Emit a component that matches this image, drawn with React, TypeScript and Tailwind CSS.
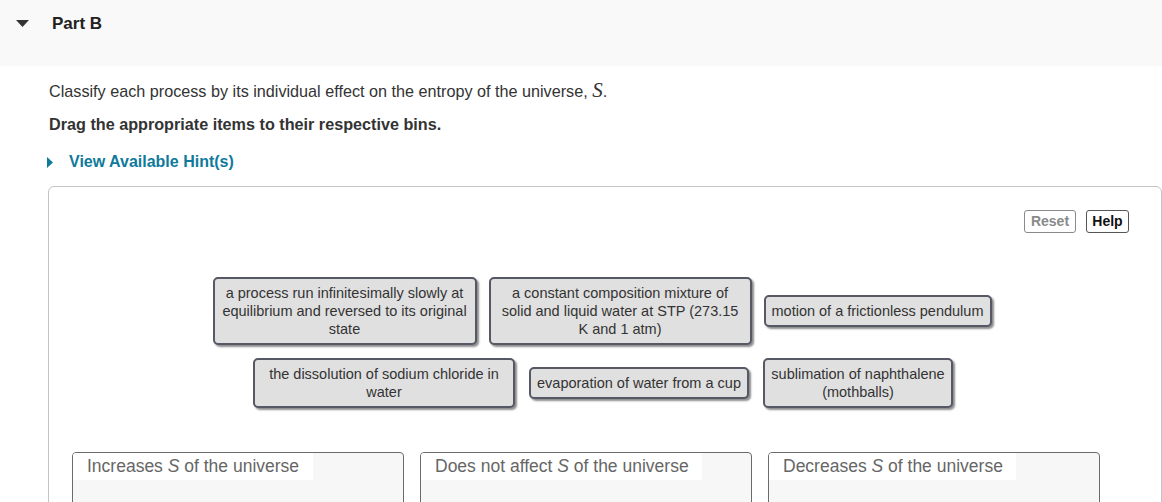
import * as React from "react"

type Chip = {
  text: string
  width: string
}

const ROW_ONE: Chip[] = [
  { text: "a process run infinitesimally slowly at equilibrium and reversed to its original state", width: "w-[264px]" },
  { text: "a constant composition mixture of solid and liquid water at STP (273.15 K and 1 atm)", width: "w-[263px]" },
  { text: "motion of a frictionless pendulum", width: "w-[228px]" },
]

const ROW_TWO: Chip[] = [
  { text: "the dissolution of sodium chloride in water", width: "w-[262px]" },
  { text: "evaporation of water from a cup", width: "w-[220px]" },
  { text: "sublimation of naphthalene (mothballs)", width: "w-[190px]" },
]

const BINS = [
  { before: "Increases ", after: " of the universe", labelWidth: "w-[240px]" },
  { before: "Does not affect ", after: " of the universe", labelWidth: "w-[281px]" },
  { before: "Decreases ", after: " of the universe", labelWidth: "w-[247px]" },
]

function DragChip({ chip }: { chip: Chip }) {
  return (
    <div
      className={`${chip.width} rounded-[5px] border-2 border-[#565965] bg-[#e0e0e0] px-[5px] py-[5px] text-center text-[14.5px] leading-[18px] text-[#333] shadow-[2px_2px_2px_rgba(0,0,0,0.45)]`}
    >
      {chip.text}
    </div>
  )
}

export default function App() {
  return (
    <div className="h-[502px] w-[1162px] overflow-hidden bg-white font-['Liberation_Sans',Arial,sans-serif] text-[#333]">
      <header className="flex h-[66px] items-start bg-[#f9f9f9] pl-[16px] pt-[14px]">
        <svg width="13" height="7" viewBox="0 0 13 7" className="mt-[6px]">
          <path d="M0 0 L13 0 L6.5 7 Z" fill="#333" />
        </svg>
        <h2 className="ml-[23px] text-[17px] font-bold leading-[20px] text-[#222]">Part B</h2>
      </header>

      <div className="pl-[48px]">
        <p className="mt-[14px] pl-[1px] text-[16.2px] leading-[20px] text-[#333]">
          Classify each process by its individual effect on the entropy of the universe,{" "}
          <span className="font-['Liberation_Serif',serif] text-[21px] leading-none italic">S</span>.
        </p>
        <p className="mt-[13px] pl-[1px] text-[16.2px] font-bold leading-[20px] text-[#333]">
          Drag the appropriate items to their respective bins.
        </p>
        <div className="mt-[18px] flex items-center">
          <svg width="6" height="11" viewBox="0 0 6 11" className="ml-[-1px]">
            <path d="M0 0 L6 5.5 L0 11 Z" fill="#0f7a9b" />
          </svg>
          <span className="ml-[16px] text-[16px] font-bold leading-[20px] text-[#0f7a9b]">
            View Available Hint(s)
          </span>
        </div>

        <section className="mt-[14px] h-[400px] w-[1114px] rounded-t-[6px] border border-[#c4c4c4] px-[23px] pt-[23px]">
          <div className="flex justify-end gap-[10px] pr-[9px]">
            <button className="h-[23px] w-[52px] rounded-[3px] border border-[#8a8a8a] text-[14px] font-bold text-[#8a8a8a]">
              Reset
            </button>
            <button className="h-[23px] w-[43px] rounded-[3px] border border-[#555] text-[14px] font-bold text-[#111]">
              Help
            </button>
          </div>

          <div className="mt-[44px] flex flex-col items-center gap-[13px] pr-[6px]">
            <div className="flex items-center gap-[12px]">
              {ROW_ONE.map((chip) => (
                <DragChip key={chip.text} chip={chip} />
              ))}
            </div>
            <div className="flex items-center gap-[14px] pl-[2px]">
              {ROW_TWO.map((chip) => (
                <DragChip key={chip.text} chip={chip} />
              ))}
            </div>
          </div>

          <div className="mt-[44px] flex gap-[16px]">
            {BINS.map((bin) => (
              <div
                key={bin.before}
                className="h-[120px] w-[332px] overflow-hidden rounded-[4px] border border-[#6b6b6b] bg-[#f7f7f7]"
              >
                <div
                  className={`${bin.labelWidth} h-[27px] bg-white pl-[14px] text-[17.5px] leading-[27px] text-[#666]`}
                >
                  {bin.before}
                  <span className="italic">S</span>
                  {bin.after}
                </div>
              </div>
            ))}
          </div>
        </section>
      </div>
    </div>
  )
}
